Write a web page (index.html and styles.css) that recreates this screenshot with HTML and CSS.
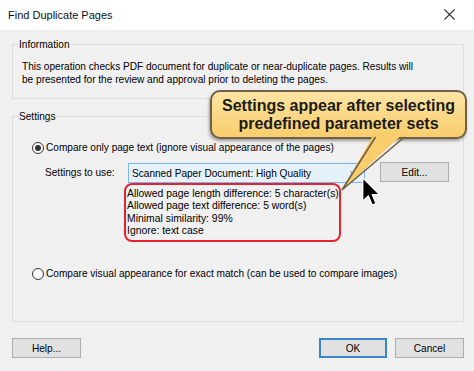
FILE: index.html
```html
<!DOCTYPE html>
<html lang="en">
<head>
    <meta charset="UTF-8">
    <meta name="viewport" content="width=device-width, initial-scale=1.0">
    <title>Find Duplicate Pages</title>
    <link rel="stylesheet" href="styles.css">
</head>
<body>
    <div class="window">
        <div class="titlebar">
            <span class="title">Find Duplicate Pages</span>
            <svg class="close" width="11" height="11" viewBox="0 0 11 11">
                <path d="M0.5 0.5 L10.5 10.5 M10.5 0.5 L0.5 10.5" stroke="#333" stroke-width="1.1" fill="none"/>
            </svg>
        </div>

        <div class="content">
            <!-- Información -->
            <fieldset class="group info">
                <legend>Information</legend>
                <p>This operation checks PDF document for duplicate or near-duplicate pages. Results will<br>be presented for the review and approval prior to deleting the pages.</p>
            </fieldset>

            <!-- Ajustes -->
            <fieldset class="group settings">
                <legend>Settings</legend>
                <div class="option">
                    <span class="radio checked"></span>
                    <span>Compare only page text (ignore visual appearance of the pages)</span>
                </div>

                <div class="setting-row">
                    <span class="setting-label">Settings to use:</span>
                    <div class="combo-col">
                        <div class="combo">
                            <span>Scanned Paper Document: High Quality</span>
                            <svg width="8" height="5" viewBox="0 0 8 5">
                                <path d="M0.5 0.5 L4 4 L7.5 0.5" stroke="#555" stroke-width="1" fill="none"/>
                            </svg>
                        </div>
                        <div class="preset-details">
                            <div>Allowed page length difference: 5 character(s)</div>
                            <div>Allowed page text difference: 5 word(s)</div>
                            <div>Minimal similarity: 99%</div>
                            <div>Ignore: text case</div>
                        </div>
                    </div>
                    <button class="btn edit">Edit...</button>
                </div>

                <div class="option option-visual">
                    <span class="radio"></span>
                    <span>Compare visual appearance for exact match (can be used to compare images)</span>
                </div>
            </fieldset>

            <div class="actions">
                <button class="btn">Help...</button>
                <span class="spacer"></span>
                <button class="btn default">OK</button>
                <button class="btn">Cancel</button>
            </div>
        </div>

        <!-- Globo de ayuda encima del diálogo -->
        <div class="callout">Settings appear after selecting<br>predefined parameter sets</div>
        <svg class="callout-tail" width="474" height="371" viewBox="0 0 474 371">
            <polygon points="375,132 405,132 342,190" fill="#f8cd6c"/>
            <path d="M375.5 137 L342 190 L404.5 137" stroke="#6f6048" stroke-width="1.6" fill="none" stroke-linejoin="miter"/>
        </svg>

        <svg class="cursor" width="19" height="30" viewBox="0 0 13 20.5">
            <path d="M0.5 0.5 L0.5 16.5 L4.3 12.9 L7 19.3 L9.6 18.2 L7 12 L12 12 Z" fill="#000" stroke="#fff" stroke-width="0.9" stroke-linejoin="round"/>
        </svg>
    </div>
</body>
</html>
```

FILE: styles.css
```css
/* Diálogo estilo Windows */
body {
    margin: 0;
    padding: 0;
    background-color: #f0f0f0;
    font-family: "Liberation Sans", Arial, sans-serif;
    font-size: 10.1px;
    color: #000;
}

.window {
    position: relative;
    width: 474px;
    height: 371px;
    overflow: hidden;
    background-color: #f0f0f0;
}

.titlebar {
    height: 30px;
    background-color: #fff;
    display: flex;
    align-items: center;
    justify-content: space-between;
    padding: 0 19px 0 8px;
}

.title {
    font-size: 11px;
    color: #111;
}

.close {
    margin-top: -2px;
}

.content {
    padding: 0 10px 0 12px;
}

.group {
    margin: 0;
    min-width: 0;
    border: 1px solid #dcdcdc;
    padding: 9px 9px 12px;
}

.group legend {
    margin-left: -4px;
    padding: 0 1px;
    line-height: 13px;
}

.info {
    margin-top: 8px;
}

.info p {
    margin: 0;
    line-height: 13px;
}

.settings {
    margin-top: 11px;
    padding-top: 18px;
    padding-bottom: 41px;
}

.option {
    display: flex;
    align-items: center;
    line-height: 13px;
    margin-left: 10px;
}

.radio {
    width: 10px;
    height: 10px;
    border: 1px solid #333;
    border-radius: 50%;
    background-color: #fff;
    margin-right: 2px;
    display: flex;
    align-items: center;
    justify-content: center;
}

.radio.checked::after {
    content: "";
    width: 6px;
    height: 6px;
    border-radius: 50%;
    background-color: #333;
}

.setting-row {
    display: flex;
    align-items: flex-start;
    margin: 9px 0 0 23px;
}

.setting-label {
    width: 83px;
    line-height: 20px;
}

.combo-col {
    width: 237px;
}

.combo {
    height: 18px;
    border: 1px solid #7eb4ea;
    background-color: #e5f1fb;
    display: flex;
    align-items: center;
    justify-content: space-between;
    padding: 0 6px 0 3px;
}

.preset-details {
    width: 210px;
    margin-left: -4px;
    border: 2px solid #e3242f;
    border-radius: 8px;
    padding: 3px 2px 3px 1px;
    font-size: 10.4px;
    line-height: 12.3px;
    white-space: nowrap;
}

.edit {
    margin: -1px 0 0 15px;
    width: 68px;
}

.option-visual {
    margin-top: 25px;
}

.actions {
    display: flex;
    gap: 8px;
    margin-top: 16px;
}

.spacer {
    flex: 1;
}

/* Botones */
.btn {
    width: 69px;
    height: 20px;
    padding: 0;
    font-family: inherit;
    font-size: 10.1px;
    color: #000;
    background-color: #e1e1e1;
    border: 1px solid #adadad;
}

.btn.default {
    width: 68px;
    border: 2px solid #3a84cc;
}

/* Globo amarillo */
.callout {
    position: absolute;
    left: 210px;
    top: 90px;
    width: 253px;
    height: 45px;
    border: 2px solid #6f6048;
    border-radius: 10px;
    background: linear-gradient(#fde4a4, #f8cd6c);
    box-shadow: -1px 2px 3px rgba(0, 0, 0, 0.35);
    font-size: 16px;
    font-weight: bold;
    line-height: 18px;
    text-align: center;
    color: #1c1c1c;
    display: flex;
    align-items: center;
    justify-content: center;
}

.callout-tail {
    position: absolute;
    left: 0;
    top: 0;
}

.cursor {
    position: absolute;
    left: 362px;
    top: 177px;
}
```
